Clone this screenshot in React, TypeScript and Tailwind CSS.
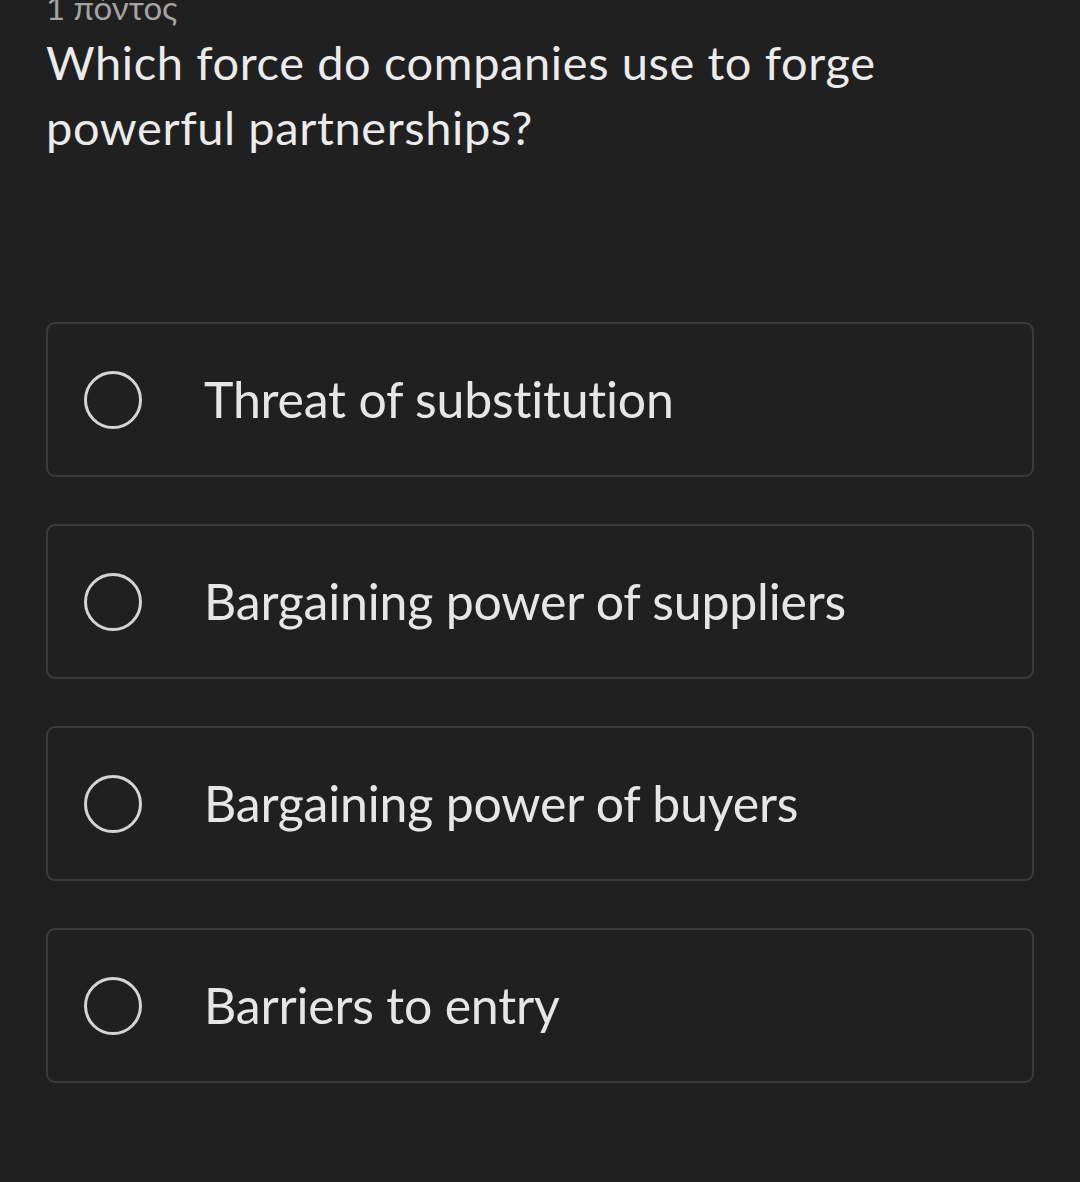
import React from "react";

const options = [
  "Threat of substitution",
  "Bargaining power of suppliers",
  "Bargaining power of buyers",
  "Barriers to entry",
];

export default function App() {
  return (
    <div className="min-h-[1182px] w-[1080px] bg-[#202020] px-[46px] overflow-hidden" style={{ fontFamily: "Lato, 'Noto Sans', sans-serif" }}>
      <div className="-mt-[13px] text-[33px] leading-[40px] text-[#a3a3a3]">1 πόντος</div>
      <div className="mt-[3px] max-w-[880px] text-[47px] leading-[65px] text-[#ebebeb] tracking-[0.6px]">
        Which force do companies use to forge powerful partnerships?
      </div>
      <div className="mt-[162px] flex flex-col gap-[47px]">
        {options.map((o) => (
          <div key={o} className="h-[155px] rounded-[9px] border-2 border-[#3b3b3b] flex items-center pl-[36px]">
            <div className="w-[58px] h-[58px] rounded-full border-[3px] border-[#d4d4d4] shrink-0" />
            <div className="ml-[62px] text-[50px] text-[#e6e6e6] tracking-[-0.2px]">{o}</div>
          </div>
        ))}
      </div>
    </div>
  );
}
